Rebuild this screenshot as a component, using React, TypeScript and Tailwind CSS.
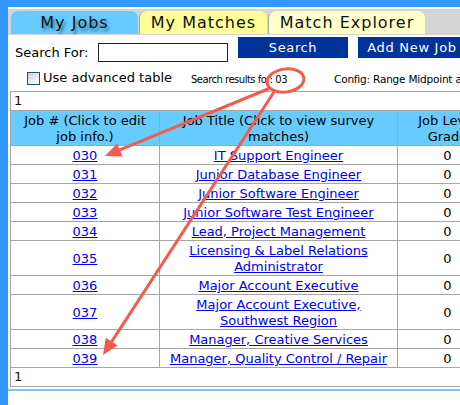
import React from "react";

type Job = { id: string; title: string[] };

const jobs: Job[] = [
	{ id: "030", title: ["IT Support Engineer"] },
	{ id: "031", title: ["Junior Database Engineer"] },
	{ id: "032", title: ["Junior Software Engineer"] },
	{ id: "033", title: ["Junior Software Test Engineer"] },
	{ id: "034", title: ["Lead, Project Management"] },
	{ id: "035", title: ["Licensing & Label Relations", "Administrator"] },
	{ id: "036", title: ["Major Account Executive"] },
	{ id: "037", title: ["Major Account Executive,", "Southwest Region"] },
	{ id: "038", title: ["Manager, Creative Services"] },
	{ id: "039", title: ["Manager, Quality Control / Repair"] },
];

const cell = "border border-[#a6a6a6] px-[3px] pt-[2px] pb-0 leading-[16px] text-center align-middle";

const Annotations = () => (
	<svg
		className="absolute left-0 top-0 pointer-events-none"
		width="460"
		height="405"
		viewBox="0 0 460 405"
	>
		<g stroke="#f25c4c" strokeWidth="3" fill="none" strokeLinecap="round">
			<ellipse cx="285.5" cy="80.5" rx="18.5" ry="11.5" transform="rotate(-8 285.5 80.5)" />
			<line x1="268" y1="89" x2="119.8" y2="149.9" />
			<line x1="274" y1="92" x2="111.7" y2="341.6" />
		</g>
		<g fill="#f25c4c">
			<polygon points="105,156 122.5,156.4 117.1,143.4" />
			<polygon points="103,355 117.6,345.4 105.8,337.8" />
		</g>
	</svg>
);

const App = () => {
	return (
		<div className="relative w-[460px] h-[405px] overflow-hidden bg-[#3399ff] pt-[7px] pl-[8px] font-['DejaVu_Sans',Verdana,sans-serif] text-[13px] text-black">
			<div className="h-full bg-white pt-[2px]">
				{/* tabs */}
				<div className="flex items-start gap-px h-[26px] pt-[2px] pl-[3px] bg-[#d4d4d4] text-[16px] tracking-[1px] text-[#111]">
					<div className="flex shrink-0 items-center justify-center w-[127px] h-[23px] rounded-t-[7px] bg-[#66ccff] [text-shadow:2px_3px_3px_rgba(0,0,0,0.45)]">
						My Jobs
					</div>
					<div className="flex shrink-0 items-center justify-center w-[128px] h-[23px] rounded-t-[7px] bg-[#ffff99] border-l border-[#a8a8a8]">
						My Matches
					</div>
					<div className="flex shrink-0 items-center justify-center w-[157px] h-[23px] rounded-t-[7px] bg-[#ffffcc] border-l border-[#a8a8a8]">
						Match Explorer
					</div>
				</div>

				{/* search row */}
				<div className="flex items-start mt-[2px] pl-[7px] whitespace-nowrap">
					<span className="shrink-0 w-[83px] mt-[8px] leading-[16px]">Search For:</span>
					<input
						type="text"
						className="shrink-0 w-[130px] h-[19px] mt-[6px] border border-[#222] outline-none"
					/>
					<button className="shrink-0 ml-[10px] w-[110px] h-[21px] bg-[#003399] text-white tracking-[0.6px]">
						Search
					</button>
					<button className="shrink-0 ml-[10px] w-[108px] h-[21px] bg-[#003399] text-white tracking-[0.7px]">
						Add New Job
					</button>
				</div>

				{/* options row */}
				<div className="flex items-center h-[16px] mt-[8px] whitespace-nowrap">
					<span className="shrink-0 ml-[19px] w-[13px] h-[13px] border border-[#1c5180] bg-linear-to-br from-[#d2d2d2] to-white" />
					<span className="shrink-0 ml-[3px] leading-[16px]">Use advanced table</span>
					<span className="shrink-0 ml-[19px] text-[10px] tracking-[-0.5px] mt-[3px]">Search results for: 03</span>
					<span className="shrink-0 ml-[47px] text-[10.5px] tracking-[-0.2px] mt-[3px]">Config: Range Midpoint and</span>
				</div>

				{/* table */}
				<table className="mt-[5px] ml-[2px] table-fixed border-collapse w-[587px]">
					<colgroup>
						<col className="w-[149px]" />
						<col className="w-[238px]" />
						<col className="w-[100px]" />
						<col className="w-[100px]" />
					</colgroup>
					<tbody>
						<tr>
							<td colSpan={4} className="border border-[#a6a6a6] px-[3px] py-[1px] leading-[16px] text-left text-[#330000]">
								1
							</td>
						</tr>
						<tr className="bg-[#66ccff]">
							<td className={cell + " pt-[2px]"}>
								Job # (Click to edit
								<br />
								job info.)
							</td>
							<td className={cell + " pt-[2px]"}>
								Job Title (Click to view survey
								<br />
								matches)
							</td>
							<td className={cell + " pt-[2px]"}>
								Job Level
								<br />
								Grade
							</td>
							<td className={cell + " pt-[2px]"}>
								Job Family
								<br />
								Code
							</td>
						</tr>
						{jobs.map((job) => (
							<tr key={job.id}>
								<td className={cell}>
									<a href="#" className="text-[#0000ee] underline">
										{job.id}
									</a>
								</td>
								<td className={cell + " whitespace-nowrap"}>
									<a href="#" className="text-[#0000ee] underline">
										{job.title.map((line, i) => (
											<React.Fragment key={i}>
												{i > 0 && <br />}
												{line}
											</React.Fragment>
										))}
									</a>
								</td>
								<td className={cell}>0</td>
								<td className={cell}>&nbsp;</td>
							</tr>
						))}
						<tr>
							<td colSpan={4} className="border border-[#a6a6a6] px-[3px] py-[1px] leading-[16px] text-left text-[#330000]">
								1
							</td>
						</tr>
					</tbody>
				</table>

				<div className="mt-[2px] h-[2px] bg-[#7cc8f4]" />
			</div>
			<Annotations />
		</div>
	);
};

export default App;
